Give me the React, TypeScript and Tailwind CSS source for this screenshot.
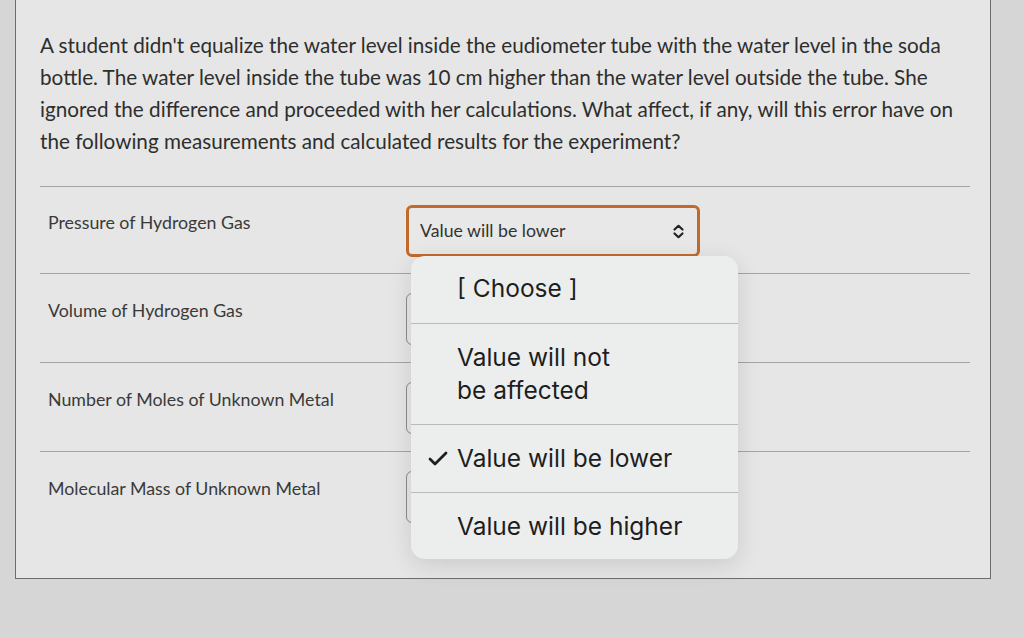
import { Check } from "lucide-react";

const rows = [
  "Pressure of Hydrogen Gas",
  "Volume of Hydrogen Gas",
  "Number of Moles of Unknown Metal",
  "Molecular Mass of Unknown Metal",
];

function UpDown() {
  return (
    <svg width="13" height="15" viewBox="0 0 13 15" fill="none">
      <path d="M2.5 5.5 L6.5 1.8 L10.5 5.5" stroke="#222" strokeWidth="2.2" strokeLinecap="round" strokeLinejoin="round" />
      <path d="M2.5 9.5 L6.5 13.2 L10.5 9.5" stroke="#222" strokeWidth="2.2" strokeLinecap="round" strokeLinejoin="round" />
    </svg>
  );
}

function Menu() {
  const item = "px-[46px] py-[17px] text-[24.5px] leading-[33px] text-[#1e1e1e]";
  return (
    <div className="absolute left-[5px] top-[53px] z-10 w-[327px] rounded-[14px] bg-[#eceeed] shadow-[0_6px_24px_rgba(0,0,0,0.12)] font-['Inter',sans-serif]">
      <div className="px-[46px] pb-[18px] pt-[16px] text-[24.5px] leading-[33px] text-[#1e1e1e]">[ Choose ]</div>
      <div className="h-px bg-[#b9bab9]" />
      <div className={item}>
        Value will not
        <br />
        be affected
      </div>
      <div className="h-px bg-[#b9bab9]" />
      <div className={`${item} relative`}>
        <Check className="absolute left-[15px] top-[22px] h-[24px] w-[24px] text-[#1e1e1e]" strokeWidth={2.8} />
        Value will be lower
      </div>
      <div className="h-px bg-[#b9bab9]" />
      <div className="px-[46px] pb-[16px] pt-[17px] text-[24.5px] leading-[33px] text-[#1e1e1e]">Value will be higher</div>
    </div>
  );
}

export default function App() {
  return (
    <div className="min-h-[638px] w-[1024px] bg-[#d5d6d5] pl-[15px] font-['Lato',sans-serif]">
      <div className="w-[976px] border-x border-b border-[#6c6d6c] bg-[#e5e6e5] pb-[38px] pt-[29px]">
        <p className="whitespace-nowrap pl-[24px] text-[20.7px] leading-[32px] text-[#2e2e2e]">
          A student didn't equalize the water level inside the eudiometer tube with the water level in the soda
          <br />
          bottle. The water level inside the tube was 10 cm higher than the water level outside the tube. She
          <br />
          ignored the difference and proceeded with her calculations. What affect, if any, will this error have on
          <br />
          the following measurements and calculated results for the experiment?
        </p>
        <div className="ml-[24px] mr-[20px] mt-[29px] border-t border-[#a4a5a4]">
          {rows.map((label, i) => (
            <div
              key={label}
              className={`flex items-start ${i === 0 ? "py-[16px]" : "py-[17px]"} ${
                i < rows.length - 1 ? "border-b border-[#a4a5a4]" : ""
              }`}
            >
              <div className="w-[366px] pl-[8px] pt-[7px] text-[17.8px] leading-[24px] text-[#3a3a3a]">{label}</div>
              <div className="relative">
                {i === 0 ? (
                  <>
                    <div className="mt-[2px] flex h-[52px] w-[294px] items-center justify-between rounded-[6px] border-[3px] border-[#c26a2c] bg-[#e7e8e7] pl-[11px] pr-[12px] text-[17.7px] text-[#333]">
                      <span>Value will be lower</span>
                      <UpDown />
                    </div>
                    <Menu />
                  </>
                ) : (
                  <div className="mt-[2px] h-[52px] w-[292px] rounded-[6px] border border-[#8a8b8a] bg-[#e7e8e7]" />
                )}
              </div>
            </div>
          ))}
        </div>
      </div>
    </div>
  );
}
